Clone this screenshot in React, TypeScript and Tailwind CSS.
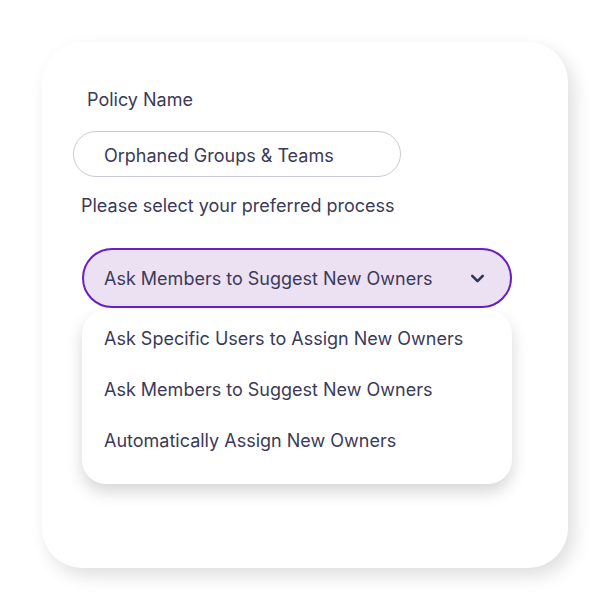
import { ChevronDown } from "lucide-react";

const options = [
  "Ask Specific Users to Assign New Owners",
  "Ask Members to Suggest New Owners",
  "Automatically Assign New Owners",
];

export default function App() {
  return (
    <div
      className="w-[612px] h-[612px] bg-white pt-[42px] pl-[42px]"
      style={{ fontFamily: "Inter, 'Open Sans', sans-serif" }}
    >
      <div className="w-[526px] h-[526px] bg-white rounded-[40px] shadow-[6px_8px_18px_rgba(0,0,0,0.13)] flex flex-col text-[#3b3a58]">
        {/* Policy name */}
        <div className="pt-[46px] pl-[45px] text-[18px] leading-6">Policy Name</div>
        <div className="mt-[19px] ml-[31px] w-[328px] h-[46px] rounded-full border border-[#c9c9d1] flex items-center pt-[3px] pl-[30px] text-[18px]">
          Orphaned Groups &amp; Teams
        </div>

        <div className="mt-[17px] ml-[39px] text-[18px] leading-6">Please select your preferred process</div>

        {/* Select */}
        <div className="mt-[30px] ml-[40px] w-[430px] h-[60px] rounded-full border-2 border-[#6a1fc4] bg-[#ebe1f2] flex items-center justify-between pl-[20px] pr-[22px] text-[18px]">
          <span>Ask Members to Suggest New Owners</span>
          <ChevronDown className="w-[21px] h-[21px] text-[#35344f]" strokeWidth={3} />
        </div>

        {/* Dropdown menu */}
        <div className="mt-[2px] ml-[40px] w-[430px] rounded-[24px] bg-white shadow-[0_8px_16px_rgba(0,0,0,0.16)] pt-[3px] pb-[18px] flex flex-col">
          {options.map((o) => (
            <div key={o} className="h-[51px] flex items-center pl-[22px] text-[18px]">
              {o}
            </div>
          ))}
        </div>
      </div>
    </div>
  );
}
